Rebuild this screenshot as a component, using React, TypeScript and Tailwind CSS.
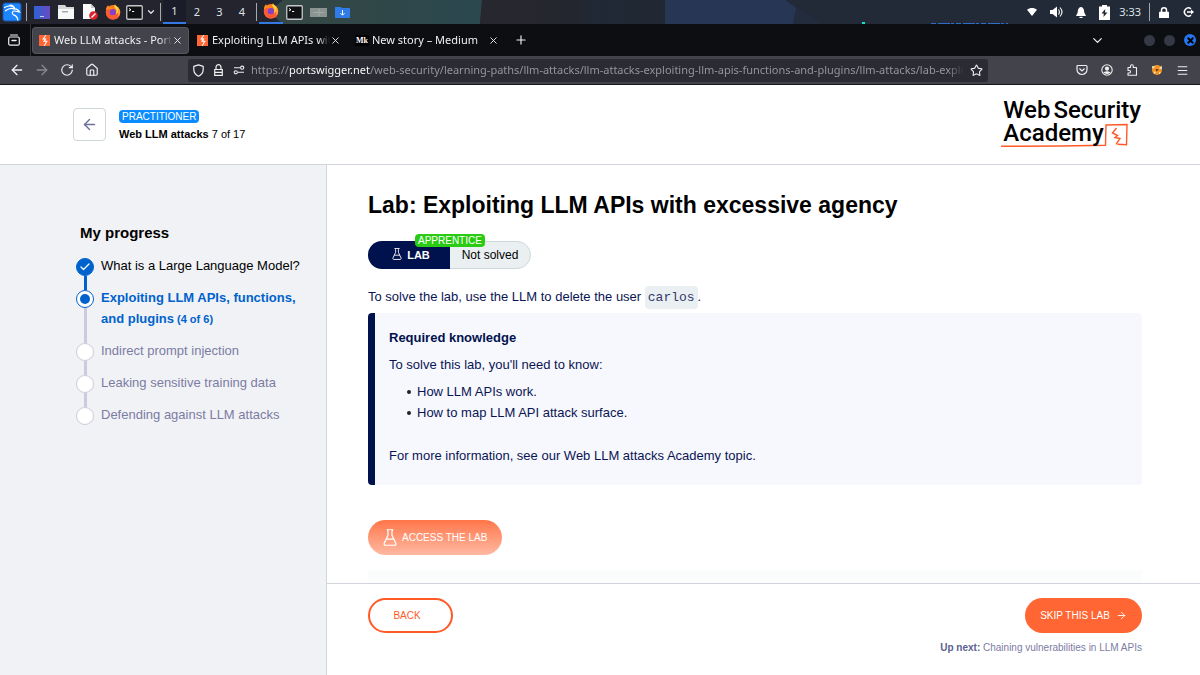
import React from "react";
import { ArrowLeft, ArrowRight, Check, ChevronDown, House, Menu, Plus, RotateCw, Star, X } from "lucide-react";

function Firefox({ className }: { className?: string }) {
  return (
    <svg viewBox="0 0 16 16" className={className} aria-hidden="true">
      <circle cx="8" cy="8.3" r="7.2" fill="#ff7a1a" />
      <path d="M1 6C1 3 2.500 1.800 3.300 1.200 3.300 2.300 3.900 3 5 3.200 6.500 3 7 4 8 5 5 5 4 7 4.500 9Z" fill="#ff8a1f" />
      <circle cx="7.800" cy="8.200" r="3.300" fill="#8a3fc4" />
      <path d="M1 8C1 13 4 15.500 8 15.500 13 15.500 15.500 12 15.200 7.500 14.800 5 13.500 3.800 12.500 3.200 13 5 12 9 10.500 10.500 8.500 12.500 5.500 12 4.500 9.500 3.500 8 4 6 5.500 5.500 3.500 4.500 1.500 5 1 8Z" fill="#fb5a33" />
      <path d="M10 .300C9 1.500 9 3 10.300 4.300 12 6 11.900 8.500 10.800 10.200 13.800 9.500 14 5.500 12.800 3.300 11.800 2.500 10.500 1.700 10 .300Z" fill="#ffd83d" />
      <path d="M12.800 3.300C15.500 6 15.800 10 13 12.500 13.500 10 13.500 6 12.800 3.300Z" fill="#ffb62e" />
    </svg>
  );
}

function Terminal() {
  return (
    <svg viewBox="0 0 17 15" className="h-[15px] w-[17px]" aria-hidden="true">
      <rect x=".75" y=".75" width="15.500" height="13.500" rx="1" fill="#101112" stroke="#c5c7ca" strokeWidth="1.300" />
      <path d="M3 3.500 5 4.700 3 6M6 6.500h2.200" stroke="#fff" strokeWidth="1" fill="none" />
    </svg>
  );
}

function Kali() {
  return (
    <svg viewBox="0 0 20 20" className="h-5 w-5" aria-hidden="true">
      <rect x=".5" y=".5" width="19" height="19" rx="3" fill="#1b55a8" />
      <rect x="1.500" y="1.500" width="17" height="17" rx="2" fill="#1d86ff" />
      <path d="M2.500 5.500C7 3.200 10.500 3.500 12.800 6.500M3.500 8.800C7 6 10 5.800 12.300 7.200M8 3C10 3 12 4.500 13 6.800 15 7 16.500 8 17.500 10 15.500 9 14.500 9.500 12.500 9 10 8.800 9.500 11.500 11.500 12.800 14 13.500 15.500 15 15.800 18" fill="none" stroke="#fff" strokeWidth="1.200" strokeLinecap="round" />
    </svg>
  );
}

function Bolt({ className }: { className?: string }) {
  return (
    <svg viewBox="0 0 12 12" className={className} aria-hidden="true">
      <rect width="12" height="12" fill="#ff6633" />
      <path d="M7 0 3.500 4.800H6L4.300 7.300H7.500L5 12H6.200L9.500 6.200H6.800L8.300 3.900H5.600L8.200 0Z" fill="#fff" />
    </svg>
  );
}

function Flask({ className }: { className?: string }) {
  return (
    <svg viewBox="0 0 14 18" className={className} fill="none" stroke="currentColor" strokeWidth="1.300" strokeLinejoin="round" strokeLinecap="round" aria-hidden="true">
      <path d="M4 .800h6M4.300 1 4.900 2.600V6.500L.900 15C.400 16.300 1 17.200 2.200 17.200H11.800C13 17.200 13.600 16.300 13.100 15L9.100 6.500V2.600L9.700 1M3.300 10.800h7.400" />
    </svg>
  );
}

function Separator() {
  return <span className="h-[18px] w-px bg-[#a5a8ac]" />;
}

function DesktopPanel() {
  return (
    <header className="relative flex h-6 shrink-0 items-center justify-between overflow-hidden bg-[#212a36] text-[#dfe3e8]">
      <svg className="absolute inset-0 h-full w-full" viewBox="0 0 1200 24" preserveAspectRatio="none" aria-hidden="true">
        <defs>
          <linearGradient id="green" x1="0" x2="1">
            <stop offset="0" stopColor="#364743" />
            <stop offset="1" stopColor="#2b484f" />
          </linearGradient>
          <linearGradient id="slate" x1="0" x2="1">
            <stop offset="0" stopColor="#27272f" />
            <stop offset=".5" stopColor="#24262f" />
            <stop offset=".65" stopColor="#1f2935" />
            <stop offset="1" stopColor="#212733" />
          </linearGradient>
        </defs>
        <path d="M0 0H275V24H0Z" fill="#23242e" />
        <path d="M283 0H482L480 24H283L269 12Z" fill="url(#green)" />
        <path d="M482 0H665V24H480Z" fill="url(#slate)" />
        <path d="M665 0H787L823 24H665Z" fill="#232c3d" />
        <path d="M665 0H785L796 8 793 24H665Z" fill="#273655" />
        <path d="M862 22h3v2h-3z" fill="#16e0c4" />
        <path d="M931 23.500h77" stroke="#2f6ec8" strokeWidth="1" strokeDasharray="5 2 12 1 3 2" />
      </svg>
      <nav aria-label="Applications" className="relative flex h-full items-center">
        <button aria-label="Applications menu" className="ml-0.5"><Kali /></button>
        <span className="ml-1 flex"><Separator /></span>
        <button aria-label="Desktop" className="ml-[7px]">
          <svg viewBox="0 0 16 13" className="h-[13px] w-4"><defs><linearGradient id="desk" x1="0" x2="1"><stop stopColor="#2d62d2" /><stop offset="1" stopColor="#6a4bc4" /></linearGradient></defs><rect width="16" height="13" fill="url(#desk)" /><path d="M6 10.500h4" stroke="#c3d0f5" /></svg>
        </button>
        <button aria-label="Files" className="ml-2">
          <svg viewBox="0 0 16 14" className="h-3.5 w-4"><path d="M0 0h7l1.500 2H16v12H0Z" fill="#d5d7d9" /><path d="M0 4h16v10H0Z" fill="#f7f8f8" /><path d="M4 6.800h6" stroke="#7f8388" /></svg>
        </button>
        <button aria-label="Text editor" className="ml-[9px]">
          <svg viewBox="0 0 15 16" className="h-4 w-[15px]"><path d="M0 0h8l4 4v11H0Z" fill="#fafafa" /><path d="M8 0v4h4Z" fill="#c9c9c9" /><circle cx="10.500" cy="11.500" r="4.300" fill="#d9242b" /><path d="M8.500 13.500 12.500 9.500" stroke="#fff" strokeWidth="1.200" /></svg>
        </button>
        <button aria-label="Firefox" className="ml-[7px]"><Firefox className="h-4 w-4" /></button>
        <button aria-label="Terminal" className="ml-[5px]"><Terminal /></button>
        <button aria-label="More launchers" className="ml-[3px]"><ChevronDown size={10} strokeWidth={3} /></button>
        <span className="ml-1 flex"><Separator /></span>
        <ol className="flex h-full text-[11px]">
          <li className="ml-0.5"><button className="h-full w-[23px] border-b-2 border-[#347ae2] bg-[#1a1d29]">1</button></li>
          <li><button className="h-full w-[22px]">2</button></li>
          <li><button className="h-full w-[23px]">3</button></li>
          <li><button className="h-full w-[22px]">4</button></li>
        </ol>
        <span className="ml-[3px] flex"><Separator /></span>
        <button aria-label="Firefox window" className="ml-0.5 flex h-full w-6 items-center justify-center border-b-2 border-[#347ae2]"><Firefox className="h-4 w-4" /></button>
        <button aria-label="Terminal window" className="ml-[3px]"><Terminal /></button>
        <button aria-label="Image window" className="ml-[7px]"><svg viewBox="0 0 17 9" className="h-[9px] w-[17px]"><rect width="17" height="9" fill="#8c9491" /><path d="M3 4.500h11M9 1v7" stroke="#a3aba8" /></svg></button>
        <button aria-label="Downloads window" className="ml-2"><svg viewBox="0 0 15 11" className="h-[11px] w-[15px]"><path d="M0 0h6l1 1h8v10H0Z" fill="#2f7be8" /><path d="M7.500 3v5M5.500 6.200l2 2 2-2" stroke="#fff" fill="none" /></svg></button>
      </nav>
      <div className="relative flex items-center text-[11px]">
        <svg viewBox="0 0 10 8" className="h-2 w-2.5" aria-label="Network"><path d="M0 1.800C3-.6 7-.6 10 1.800L5 8Z" fill="#fff" /></svg>
        <svg viewBox="0 0 13 12" className="ml-[13px] h-3 w-[13px]" aria-label="Volume"><path d="M0 4h2.500L7 .500v11L2.500 8H0Z" fill="#fff" /><path d="M8.500 3.500q1.800 2.500 0 5M10 1.500q4 4.500 0 9" stroke="#fff" strokeWidth="1.100" fill="none" /></svg>
        <svg viewBox="0 0 10 11" className="ml-[13px] h-[11px] w-2.5" aria-label="Notifications"><path d="M5 0C8 .800 8 3 8.300 5.500L10 9H0L1.700 5.500C2 3 2 .800 5 0Z" fill="#fff" /><path d="M3.500 9.800h3v1.200h-3z" fill="#fff" /></svg>
        <svg viewBox="0 0 11 15" className="ml-[13px] h-[15px] w-[11px]" aria-label="Battery"><path d="M3 0h5v1.500h3V15H0V1.500h3Z" fill="#fff" /><path d="M6.300 4 2.500 8.500h2.300L4.500 12 8.500 7.500H6Z" fill="#1f2835" /></svg>
        <time className="ml-[9px]">3:33</time>
        <span className="ml-2 flex"><Separator /></span>
        <svg viewBox="0 0 10 11" className="ml-[9px] h-[11px] w-2.5" aria-label="Lock screen"><path d="M2.500 5V3.300a2.500 2.500 0 0 1 5 0V5" stroke="#fff" strokeWidth="1.500" fill="none" /><rect y="4.800" width="10" height="6.200" rx=".5" fill="#fff" /></svg>
        <svg viewBox="0 0 11 10" className="ml-[14px] mr-1.5 h-2.5 w-[11px]" aria-label="Log out"><path d="M8 1.900A4 4 0 1 0 8 8.100" stroke="#fff" strokeWidth="1.500" fill="none" /><path d="M4 4.200h4V2.500L11 5 8 7.500V5.800H4Z" fill="#fff" /></svg>
      </div>
    </header>
  );
}

const fade = "min-w-0 flex-1 overflow-hidden whitespace-nowrap text-left [mask-image:linear-gradient(to_right,black_calc(100%-12px),transparent)]";

function BrowserTabs() {
  return (
    <div className="flex h-8 shrink-0 items-center bg-[#0d0e11] text-[11px] text-[#f0f0f3]">
      <button aria-label="Recent browsing" className="flex h-full w-[31px] items-center justify-center border-r border-[#34353b] pr-0.5">
        <svg viewBox="0 0 12 12" className="h-3 w-3" fill="none" stroke="#f0f0f3" strokeWidth="1.200" strokeLinecap="round"><path d="M2.500 1h7" /><rect x=".7" y="3" width="10.600" height="8.200" rx="1.500" /><path d="M4 6.500h4" strokeWidth="1.500" /></svg>
      </button>
      <div role="tablist" className="flex items-center">
        <div className="ml-0.5 flex h-[25px] w-[155px] items-center rounded-[3px] bg-[#42434b] pl-1.5 pr-[5px] shadow-[0_0_0_1px_#55565e]">
          <Bolt className="mr-1 h-[11px] w-[11px] shrink-0" />
          <button role="tab" aria-selected="true" className={fade}>Web LLM attacks - PortSwigger</button>
          <button aria-label="Close Web LLM attacks"><X size={11} /></button>
        </div>
        <div className="ml-[3px] flex h-[25px] w-[155px] items-center pl-1.5 pr-[5px]">
          <Bolt className="mr-1 h-[11px] w-[11px] shrink-0" />
          <button role="tab" aria-selected="false" className={fade}>Exploiting LLM APIs with excessive</button>
          <button aria-label="Close Exploiting LLM APIs"><X size={11} /></button>
        </div>
        <div className="ml-[3px] flex h-[25px] w-[155px] items-center pl-1.5 pr-[5px]">
          <span className="mr-[3px] bg-black px-px font-['Liberation_Serif',serif] text-[8px] font-bold leading-[11px] text-white" aria-hidden="true">Mk</span>
          <button role="tab" aria-selected="false" className={fade}>New story – Medium</button>
          <button aria-label="Close New story"><X size={11} /></button>
        </div>
      </div>
      <button aria-label="New tab" className="ml-2.5"><Plus size={14} /></button>
      <button aria-label="List all tabs" className="ml-auto mr-[39px]"><ChevronDown size={15} /></button>
      <button aria-label="Minimize" className="mr-[9px] h-[11px] w-[11px] rounded-full bg-[#353845]" />
      <button aria-label="Maximize" className="mr-[9px] h-[11px] w-[11px] rounded-full bg-[#353845]" />
      <button aria-label="Close window" className="mr-1 flex h-3 w-3 items-center justify-center rounded-full bg-[#2475f0] text-black"><X size={9} strokeWidth={5} /></button>
    </div>
  );
}

function Toolbar() {
  return (
    <div className="flex h-[29px] shrink-0 items-center border-b border-[#15161a] bg-[#42434b] text-[#f0f0f3]">
      <button aria-label="Go back" className="ml-[9px]"><ArrowLeft size={16} /></button>
      <button aria-label="Go forward" className="ml-[9px] text-[#898a90]"><ArrowRight size={16} /></button>
      <button aria-label="Reload" className="ml-2.5"><RotateCw size={14} /></button>
      <button aria-label="Home" className="ml-[11px]"><House size={14} /></button>
      <div className="ml-[89px] mr-[88px] flex h-[23px] min-w-0 flex-1 items-center rounded-[3px] bg-[#2b2c33] px-[5px]">
        <svg viewBox="0 0 11 13" className="h-[13px] w-[11px] shrink-0" fill="none" stroke="#f0f0f3" strokeWidth="1.200" strokeLinejoin="round" aria-label="Tracking protection"><path d="M5.500 .900 10.200 2.400V5.500C10.200 8.800 8 11 5.500 12.200 3 11 .800 8.800 .800 5.500V2.400Z" /></svg>
        <svg viewBox="0 0 9 12" className="ml-2.5 h-3 w-[9px] shrink-0" fill="none" stroke="#f0f0f3" strokeWidth="1.200" aria-label="Secure connection"><path d="M2 5.500V3.200a2.500 2.500 0 0 1 5 0V5.500M.700 5.500h7.600V11.300H.700ZM.700 8.400h7.600" /></svg>
        <svg viewBox="0 0 12 10" className="ml-2.5 h-2.5 w-3 shrink-0" fill="none" stroke="#f0f0f3" strokeWidth="1.100" aria-label="Permissions"><path d="M1 2.700h6M5 7.300h6" /><circle cx="9.200" cy="2.700" r="1.600" /><circle cx="2.800" cy="7.300" r="1.600" /></svg>
        <a href="#lab" className="ml-1.5 min-w-0 flex-1 overflow-hidden whitespace-nowrap text-[11px] text-[#94959b] [mask-image:linear-gradient(to_right,black_calc(100%-16px),transparent)]">
          https://<span className="text-[#f6f6f8]">portswigger.net</span>/web-security/learning-paths/llm-attacks/llm-attacks-exploiting-llm-apis-functions-and-plugins/llm-attacks/lab-exploiting-llm-apis
        </a>
        <button aria-label="Bookmark this page" className="ml-1.5 shrink-0"><Star size={13} className="block" /></button>
      </div>
      <div className="mr-[11px] flex items-center gap-[13px]">
        <button aria-label="Save to Pocket"><svg viewBox="0 0 12 12" className="block h-3 w-3" fill="none" stroke="#f0f0f3" strokeWidth="1.200" strokeLinecap="round"><path d="M2 1.500h8q1 0 1 1V5.500a5 5 0 0 1-10 0V2.500q0-1 1-1ZM3.700 4.800 6 7l2.300-2.200" /></svg></button>
        <button aria-label="Account"><svg viewBox="0 0 12 12" className="block h-3 w-3" fill="none" stroke="#f0f0f3" strokeWidth="1.100"><circle cx="6" cy="6" r="5.200" /><circle cx="6" cy="4.600" r="1.500" fill="#f0f0f3" /><path d="M3.300 8.400Q6 7.200 8.700 8.400 6 10.500 3.300 8.400Z" fill="#f0f0f3" /></svg></button>
        <button aria-label="Extensions"><svg viewBox="0 0 12 12" className="block h-3 w-3" fill="none" stroke="#f0f0f3" strokeWidth="1.100" strokeLinejoin="round"><path d="M4.500 3.500V2.200a1.400 1.400 0 0 1 2.800 0V3.500H10.500V11.300H2V9H3.300a1.200 1.200 0 0 0 0-2.500H2V3.500Z" /></svg></button>
        <button aria-label="FoxyProxy"><svg viewBox="0 0 12 12" className="block h-3 w-3"><circle cx="6" cy="6" r="5" fill="#f29422" /><path d="M1 2 4.500 2.500 1.500 5ZM10.500 1.500 8 4.500l3 .5ZM2.500 7.500l2.500 .5-1.500 2ZM8 8l2 .5-2 1.800Z" fill="#fbe4c4" /><path d="M4.500 5 8 5.500 5.500 7.500Z" fill="#5d3511" /></svg></button>
        <button aria-label="Open application menu"><Menu size={13} className="block" /></button>
      </div>
    </div>
  );
}

function AcademyLogo() {
  return (
    <a href="#academy" aria-label="Web Security Academy" className="relative mb-1.5 mr-[59px] block font-[Roboto,sans-serif] text-[24px] font-medium leading-[23px] text-black">
      <span className="flex gap-[3px]"><span>Web</span><span>Security</span></span>
      <svg viewBox="0 0 130 26" className="absolute -left-0.5 top-[23px] h-[26px] w-[130px]" fill="none" stroke="#ff5a26" aria-hidden="true">
        <path d="M0 24.300 60 24 104.500 23.300 105 3 126 2.500 125.500 22.800 116.500 22.300" strokeWidth="1.400" />
        <path d="M115.500 6 111.500 11 116.500 13.500 114 15.500 119 16.500 115 22.300" strokeWidth="1.400" />
      </svg>
      <span className="relative block">Academy</span>
    </a>
  );
}

type State = "done" | "current" | "todo";
const steps: { label: string; note?: string; state: State }[] = [
  { label: "What is a Large Language Model?", state: "done" },
  { label: "Exploiting LLM APIs, functions, and plugins", note: "(4 of 6)", state: "current" },
  { label: "Indirect prompt injection", state: "todo" },
  { label: "Leaking sensitive training data", state: "todo" },
  { label: "Defending against LLM attacks", state: "todo" },
];
const dotStyle: Record<State, string> = {
  done: "border-[#0062cc] bg-[#0062cc]",
  current: "border-[#0062cc] bg-white",
  todo: "border-[#cbcbdd] bg-white",
};
const labelStyle: Record<State, string> = {
  done: "text-black",
  current: "font-bold text-[#0062cc]",
  todo: "text-[#7c7ca3]",
};

function Sidebar() {
  return (
    <aside className="w-[327px] shrink-0 border-r border-[#d3d5dc] bg-[#f1f2f6] pl-[76px] pr-6 pt-[58px]">
      <h2 className="pl-1 text-[15px] font-bold leading-5 text-black">My progress</h2>
      <ol className="mt-3">
        {steps.map((s, i) => (
          <li key={s.label} className="flex gap-[7px]">
            <div className="flex w-[18px] shrink-0 flex-col items-center pt-[3px]">
              <span className={`-mb-[3px] flex h-[18px] w-[18px] shrink-0 items-center justify-center rounded-full border ${dotStyle[s.state]}`}>
                {s.state === "done" && <Check size={12} strokeWidth={2.5} color="#fff" />}
                {s.state === "current" && <span className="h-2.5 w-2.5 rounded-full bg-[#0062cc]" />}
              </span>
              {i < steps.length - 1 && <span className={`-mb-[3px] mt-[3px] w-[3px] flex-1 ${s.state === "done" ? "bg-[#0062cc]" : "bg-[#cbcbdd]"}`} />}
            </div>
            <a href="#step" className={`pb-[11px] text-[13px] leading-[21px] ${labelStyle[s.state]}`}>
              {s.label}{s.note && <small className="text-[11px] leading-none"> {s.note}</small>}
            </a>
          </li>
        ))}
      </ol>
    </aside>
  );
}

const topics = ["How LLM APIs work.", "How to map LLM API attack surface."];

function Lesson() {
  return (
    <main className="flex min-w-0 flex-1 flex-col bg-white">
      <section className="min-h-0 flex-1 overflow-hidden pl-[41px] pr-[58px] pt-6 text-[13px] leading-[21px] text-[#0a1553]">
        <h1 className="text-[23px] font-bold leading-8 text-black">Lab: Exploiting LLM APIs with excessive agency</h1>
        <div className="relative mt-5 flex h-7 w-[163px] rounded-full border border-[#cfd8da] bg-[#eaf0f2] text-[12px] text-black">
          <span className="-my-px -ml-px flex w-[82px] shrink-0 items-center justify-center gap-[5px] rounded-l-full bg-[#00124e] pl-1 text-[11px] font-bold text-white"><Flask className="mb-0.5 h-3 w-2.5" />LAB</span>
          <span className="flex flex-1 items-center justify-center">Not solved</span>
          <span className="absolute -top-2 left-[46px] rounded-sm bg-[#29cc12] px-[3px] text-[10px] leading-[13px] text-white">APPRENTICE</span>
        </div>
        <p className="mt-[17px]">To solve the lab, use the LLM to delete the user <code className="rounded bg-[#eaf0f2] px-[3px] py-1 font-['Liberation_Mono',monospace] text-[13px] text-[#33396b]">carlos</code>.</p>
        <div className="mt-[5px] rounded border-l-[7px] border-[#00124e] bg-[#f7f8fd] px-3.5 pb-[19px] pt-3.5">
          <h3 className="font-bold text-[#00124e]">Required knowledge</h3>
          <p className="mt-1.5">To solve this lab, you&apos;ll need to know:</p>
          <ul className="mb-[22px] mt-1.5 pl-[18px]">
            {topics.map((t) => (
              <li key={t} className="flex items-center gap-1.5">
                <span className="h-1 w-1 rounded-full bg-[#222]" />
                {t}
              </li>
            ))}
          </ul>
          <p>For more information, see our Web LLM attacks Academy topic.</p>
        </div>
        <a href="#launch" className="mt-[35px] flex h-[35px] w-[134px] items-center rounded-full bg-linear-to-b from-[#ff7547] to-[#ffb8a2] pl-[15px] text-[10px] text-white"><Flask className="mr-[5px] h-[17px] w-3.5" />ACCESS THE LAB</a>
        <div className="mt-[15px] h-10 bg-[#fbfdfd]" />
      </section>
      <footer className="flex shrink-0 items-start justify-between border-t border-[#d3d5dc] pb-[21px] pl-[41px] pr-[58px] pt-3.5 text-[10px]">
        <a href="#back" className="flex h-[35px] w-[85px] items-center justify-center rounded-full border-2 border-[#ff5a26] pr-[7px] text-[#ff5a26]">BACK</a>
        <div className="flex flex-col items-end">
          <a href="#skip" className="flex h-[35px] w-[117px] items-center justify-center gap-1.5 rounded-full bg-[#ff6633] text-white">SKIP THIS LAB<ArrowRight size={11} /></a>
          <p className="mt-[9px] leading-3 text-[#7c7ca3]"><strong className="text-[#5c5f92]">Up next:</strong> Chaining vulnerabilities in LLM APIs</p>
        </div>
      </footer>
    </main>
  );
}

export default function App() {
  return (
    <div className="flex h-screen flex-col overflow-hidden font-['Liberation_Sans',Arial,sans-serif]">
      <div className="shrink-0 font-['Noto_Sans',sans-serif]">
        <DesktopPanel />
        <BrowserTabs />
        <Toolbar />
      </div>
      <header className="flex h-[80px] shrink-0 items-center justify-between border-b border-[#d3d5dc] bg-white">
        <div className="ml-[73px] flex items-center">
          <a href="#previous" aria-label="Previous" className="flex h-[33px] w-[33px] items-center justify-center rounded border border-[#ced7d9] text-[#6c6f9c]"><ArrowLeft size={17} /></a>
          <div className="ml-[13px] mt-0.5 flex flex-col items-start">
            <span className="rounded-sm bg-[#0a8cff] px-[3px] text-[10px] leading-[13px] text-white">PRACTITIONER</span>
            <p className="mt-[3px] text-[11px] leading-4 text-black"><strong>Web LLM attacks</strong> 7 of 17</p>
          </div>
        </div>
        <AcademyLogo />
      </header>
      <div className="flex min-h-0 flex-1">
        <Sidebar />
        <Lesson />
      </div>
    </div>
  );
}
